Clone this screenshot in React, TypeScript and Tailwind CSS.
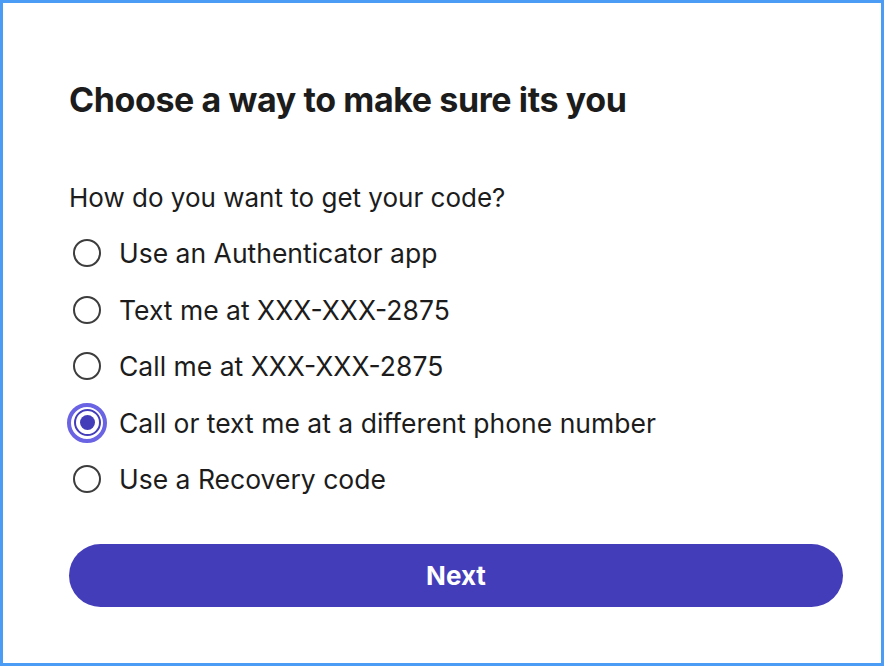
import React, { useState } from "react";

const options = [
  "Use an Authenticator app",
  "Text me at XXX-XXX-2875",
  "Call me at XXX-XXX-2875",
  "Call or text me at a different phone number",
  "Use a Recovery code",
];

export default function App() {
  const [selected, setSelected] = useState(3);
  return (
    <div
      className="h-[666px] w-full border-[3px] border-[#4b9cf5] bg-white text-[#1c1c1c]"
      style={{ fontFamily: "Inter, 'Noto Sans', sans-serif" }}
    >
      <div className="pl-[66px] pr-[38px] pt-[77px]">
        <h1 className="text-[34px] font-bold leading-[40px] tracking-[-0.4px]">
          Choose a way to make sure its you
        </h1>
        <p className="mt-[60px] text-[26px] leading-[36px]">How do you want to get your code?</p>
        <div className="mt-[9px] flex flex-col">
          {options.map((o, i) => {
            const on = i === selected;
            return (
              <label
                key={o}
                className="flex h-[56.5px] cursor-pointer items-center gap-[14px]"
                onClick={() => setSelected(i)}
              >
                <span className="flex h-[36px] w-[36px] items-center justify-center">
                  {on ? (
                    <span className="flex h-[40px] w-[40px] shrink-0 items-center justify-center rounded-full border-[4px] border-[#6a63e3]">
                      <span className="flex h-[27px] w-[27px] items-center justify-center rounded-full border-[2px] border-[#443dba]">
                        <span className="h-[15px] w-[15px] rounded-full bg-[#443dba]" />
                      </span>
                    </span>
                  ) : (
                    <span className="h-[28px] w-[28px] rounded-full border-[2.5px] border-[#3d3d3d]" />
                  )}
                </span>
                <span className="text-[26.5px] leading-[32px]">{o}</span>
              </label>
            );
          })}
        </div>
        <button className="mt-[36px] flex h-[63px] w-[774px] items-center justify-center rounded-full bg-[#443dba] text-[26px] font-bold text-white">
          Next
        </button>
      </div>
    </div>
  );
}
